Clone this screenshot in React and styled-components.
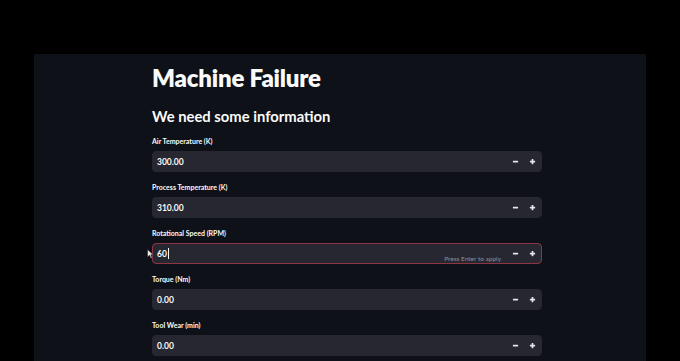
import React from "react";
import styled, { createGlobalStyle } from "styled-components";

const GlobalStyle = createGlobalStyle`
  html, body {
    margin: 0;
    padding: 0;
    background: #000;
    height: 100%;
    overflow: hidden;
  }
  body {
    font-family: "Lato", "Noto Sans", sans-serif;
    color: #fafafa;
  }
`;

const Screen = styled.div`
  height: 361px;
  padding: 54px 34px 0;
  box-sizing: border-box;
`;

const Panel = styled.main`
  position: relative;
  height: 100%;
  background: #0e1117;
  padding: 8px 0 0 118px;
  box-sizing: border-box;
`;

const Column = styled.div`
  width: 390px;
`;

const Title = styled.h1`
  margin: 0;
  font-size: 24px;
  line-height: 32px;
  font-weight: 800;
  letter-spacing: -0.2px;
`;

const Subtitle = styled.h2`
  margin: 10px 0 6px;
  font-size: 14.8px;
  line-height: 24px;
  font-weight: 700;
`;

const Field = styled.div`
  margin-bottom: 8px;
`;

const Label = styled.label`
  display: block;
  font-size: 7px;
  line-height: 14px;
  font-weight: 700;
  margin-bottom: 3px;
  color: #fafafa;
`;

const InputBox = styled.div`
  position: relative;
  height: 21px;
  box-sizing: border-box;
  display: flex;
  align-items: center;
  background: #262730;
  border: 1px solid ${(p) => (p.$focused ? "#8f3443" : "#262730")};
  border-radius: 4px;
  padding-left: 4px;
`;

const Value = styled.span`
  flex: 1;
  font-size: 8.5px;
  font-weight: 700;
  color: #fafafa;
  display: flex;
  align-items: center;
`;

const Caret = styled.span`
  display: inline-block;
  width: 1px;
  height: 11px;
  background: #fafafa;
  margin-left: 1px;
`;

const Hint = styled.span`
  position: absolute;
  right: 40px;
  bottom: 1px;
  font-size: 6.5px;
  color: #8d9099;
`;

const Stepper = styled.button`
  width: 17px;
  height: 19px;
  padding: 0;
  border: none;
  background: transparent;
  color: #fafafa;
  display: flex;
  align-items: center;
  justify-content: center;
`;

const Cursor = styled.svg`
  position: absolute;
  left: 113px;
  top: 195px;
`;

const Minus = () => (
  <svg width="7" height="7" viewBox="0 0 8 8">
    <rect x="1" y="3" width="6" height="2" rx="0.5" fill="#e6e6e8" />
  </svg>
);

const Plus = () => (
  <svg width="7" height="7" viewBox="0 0 8 8">
    <rect x="1" y="3" width="6" height="2" rx="0.5" fill="#e6e6e8" />
    <rect x="3" y="1" width="2" height="6" rx="0.5" fill="#e6e6e8" />
  </svg>
);

const fields = [
  { label: "Air Temperature (K)", value: "300.00" },
  { label: "Process Temperature (K)", value: "310.00" },
  { label: "Rotational Speed (RPM)", value: "60", focused: true },
  { label: "Torque (Nm)", value: "0.00" },
  { label: "Tool Wear (min)", value: "0.00" },
];

export default function App() {
  return (
    <>
      <GlobalStyle />
      <Screen>
        <Panel>
          <Column>
            <Title>Machine Failure</Title>
            <Subtitle>We need some information</Subtitle>
            {fields.map((f) => (
              <Field key={f.label}>
                <Label>{f.label}</Label>
                <InputBox $focused={f.focused}>
                  <Value>
                    {f.value}
                    {f.focused && <Caret />}
                  </Value>
                  {f.focused && <Hint>Press Enter to apply</Hint>}
                  <Stepper>
                    <Minus />
                  </Stepper>
                  <Stepper>
                    <Plus />
                  </Stepper>
                </InputBox>
              </Field>
            ))}
          </Column>
          <Cursor width="7" height="10" viewBox="0 0 7 10">
            <path d="M0.5 0.5 L0.5 8 L2.5 6.3 L4 9.3 L5.2 8.7 L3.8 5.8 L6.3 5.8 Z" fill="#eee" stroke="#222" strokeWidth="0.6" />
          </Cursor>
        </Panel>
      </Screen>
    </>
  );
}
